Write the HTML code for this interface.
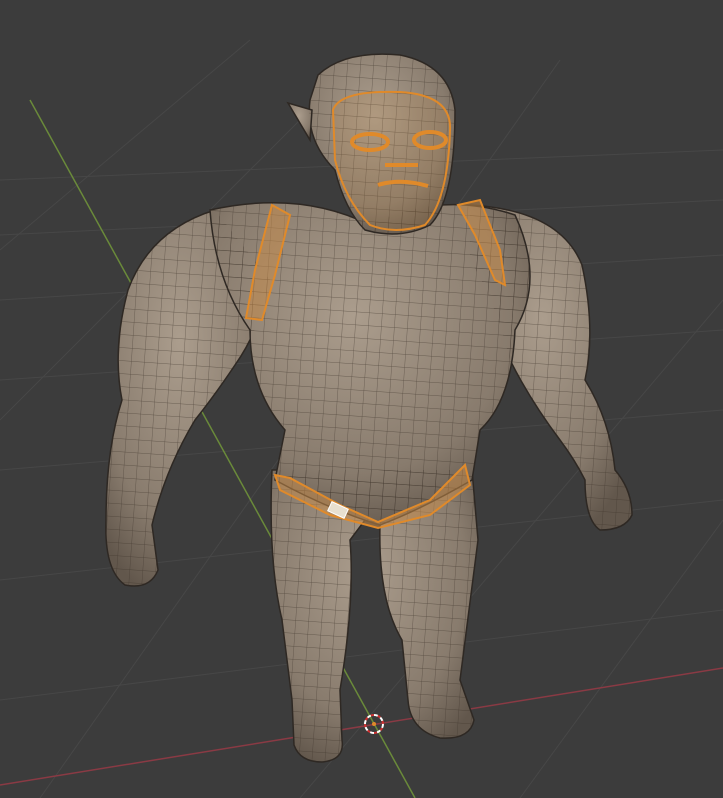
<!DOCTYPE html>
<html><head><meta charset="utf-8"><style>
html,body{margin:0;padding:0;background:#3d3d3d;}
svg{display:block}
</style></head><body>
<svg width="723" height="798" viewBox="0 0 723 798" xmlns="http://www.w3.org/2000/svg">
<defs>
<pattern id="mesh" width="13" height="13" patternUnits="userSpaceOnUse" patternTransform="rotate(4)">
<path d="M0 0H13M0 0V13" stroke="#3a3028" stroke-width="0.7" fill="none" opacity="0.7"/>
</pattern>
<radialGradient id="sh" cx="0.45" cy="0.35" r="0.7">
<stop offset="0" stop-color="#ab9d8d"/><stop offset="0.7" stop-color="#887b6d"/><stop offset="1" stop-color="#62574c"/>
</radialGradient>
</defs>
<rect width="723" height="798" fill="#3c3c3c"/>
<g stroke="#474747" stroke-width="1" fill="none">
<path d="M0 180L723 150M0 235L723 200M0 300L723 255M0 380L723 330M0 470L723 410M0 580L723 500M0 700L723 610"/>
<path d="M0 250L250 40M0 420L300 120M40 798L560 60M300 798L723 300M520 798L723 520"/>
</g>
<path d="M30 100L415 798" stroke="#6a8a3a" stroke-width="1.5"/>
<path d="M0 785L723 668" stroke="#8a3a44" stroke-width="1.5"/>
<g id="body" fill="url(#sh)" stroke="#2e2823" stroke-width="1.5">
<path d="M272 470 Q268 560 282 620 L292 700 L294 745 Q300 762 322 762 Q345 760 342 740 L340 690 Q355 600 350 540 L365 520 L380 525 Q378 600 402 640 L408 700 Q410 730 440 738 Q470 740 474 720 L460 680 Q470 600 478 540 L472 470 Z"/>
<path d="M215 210 Q150 230 128 290 Q112 350 122 400 Q106 450 106 520 Q104 570 125 585 Q150 590 158 570 L152 525 Q165 470 195 420 Q215 395 235 365 Q260 330 270 280 Z"/>
<path d="M470 205 Q560 210 582 265 Q596 330 585 380 Q610 420 615 470 Q632 490 632 515 Q625 530 600 530 Q585 520 585 480 Q575 460 560 440 Q530 400 510 360 Q495 300 470 260 Z"/>
<path d="M210 210 Q300 190 370 225 Q440 190 515 215 Q545 280 515 330 Q512 400 480 430 L472 480 Q420 510 380 525 Q330 510 275 480 L285 430 Q250 390 250 330 Q215 280 210 210 Z"/>
<path d="M318 75 Q345 50 400 55 Q450 65 455 110 Q455 200 430 225 Q400 240 365 230 Q345 210 335 170 Q305 140 310 100 Z"/>
<path d="M312 110 L288 103 L310 140 Z"/>
</g>
<g fill="url(#mesh)">
<path d="M272 470 Q268 560 282 620 L292 700 L294 745 Q300 762 322 762 Q345 760 342 740 L340 690 Q355 600 350 540 L365 520 L380 525 Q378 600 402 640 L408 700 Q410 730 440 738 Q470 740 474 720 L460 680 Q470 600 478 540 L472 470 Z"/>
<path d="M215 210 Q150 230 128 290 Q112 350 122 400 Q106 450 106 520 Q104 570 125 585 Q150 590 158 570 L152 525 Q165 470 195 420 Q215 395 235 365 Q260 330 270 280 Z"/>
<path d="M470 205 Q560 210 582 265 Q596 330 585 380 Q610 420 615 470 Q632 490 632 515 Q625 530 600 530 Q585 520 585 480 Q575 460 560 440 Q530 400 510 360 Q495 300 470 260 Z"/>
<path d="M210 210 Q300 190 370 225 Q440 190 515 215 Q545 280 515 330 Q512 400 480 430 L472 480 Q420 510 380 525 Q330 510 275 480 L285 430 Q250 390 250 330 Q215 280 210 210 Z"/>
<path d="M318 75 Q345 50 400 55 Q450 65 455 110 Q455 200 430 225 Q400 240 365 230 Q345 210 335 170 Q305 140 310 100 Z"/>
</g>
<g fill="#c58a4a" fill-opacity="0.55" stroke="#e08a2a" stroke-width="2">
<path d="M333 110 Q340 90 400 92 Q452 95 450 130 Q448 200 425 225 Q395 235 370 225 Q345 200 335 160 Z" fill-opacity="0.2"/>
<path d="M272 205 L290 215 L275 275 L262 320 L246 318 L255 270 Z"/>
<path d="M458 205 L480 200 L500 250 L505 285 L495 280 L475 235 Z"/>
<path d="M275 475 L290 478 L340 505 L378 522 L430 500 L465 465 L470 485 L430 515 L378 528 L330 515 L280 490 Z"/>
</g>
<g fill="none" stroke="#e08a2a" stroke-width="4">
<ellipse cx="370" cy="142" rx="18" ry="8"/>
<ellipse cx="430" cy="140" rx="16" ry="8"/>
<path d="M378 185 Q400 178 428 186"/>
<path d="M385 165 L418 165"/>
</g>
<rect x="329" y="505" width="18" height="10" fill="#e8e0d0" stroke="#fff" transform="rotate(25 338 510)"/>
<circle cx="374" cy="724" r="9" fill="none" stroke="#ffffff" stroke-width="2" stroke-dasharray="4 3"/>
<circle cx="374" cy="724" r="9" fill="none" stroke="#d03030" stroke-width="2" stroke-dasharray="3 4" stroke-dashoffset="3"/>
<circle cx="374" cy="724" r="2" fill="#e08a2a"/>
</svg>
</body></html>
